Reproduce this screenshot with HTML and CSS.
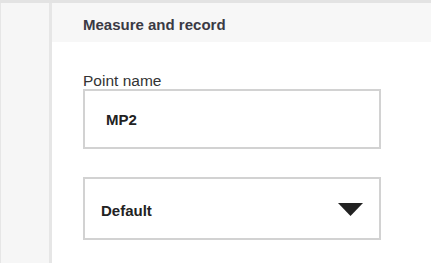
FILE: index.html
```html
<!DOCTYPE html>
<html>
<head>
<meta charset="utf-8">
<link rel="stylesheet" href="styles.css">
</head>
<body>
<div class="app">
  <aside class="sidebar"></aside>
  <main class="main">
    <div class="header">Measure and record</div>
    <div class="content">
      <label class="label">Point name</label>
      <div class="input">MP2</div>
      <div class="select">
        <span>Default</span>
        <svg class="caret" width="25" height="13" viewBox="0 0 25 13"><polygon points="0,0 25,0 12.5,13" fill="#222"/></svg>
      </div>
    </div>
  </main>
</div>
</body>
</html>
```
FILE: styles.css
```css
html, body {
  margin: 0;
  padding: 0;
  background: #fff;
}
body {
  width: 431px;
  height: 263px;
  overflow: hidden;
  font-family: "Liberation Sans", Arial, sans-serif;
  color: #333;
}
.app {
  display: flex;
  height: 260px;
  border-top: 3px solid #e3e3e3;
}
.sidebar {
  width: 48px;
  background: #f6f6f6;
  border-left: 1px solid #e6e6e6;
  border-right: 3px solid #e6e6e6;
}
.main {
  flex: 1;
  display: flex;
  flex-direction: column;
}
.header {
  height: 39px;
  background: #f7f7f7;
  display: flex;
  align-items: center;
  padding-left: 31px;
  padding-top: 3px;
  font-weight: bold;
  font-size: 15px;
  color: #3a3a44;
  box-sizing: border-box;
}
.content {
  padding: 30px 0 0 31px;
  display: flex;
  flex-direction: column;
}
.label {
  font-size: 15.5px;
  line-height: 17px;
  color: #333;
}
.input {
  width: 298px;
  height: 60px;
  box-sizing: border-box;
  border: 2px solid #d2d2d2;
  padding-left: 21px;
  display: flex;
  align-items: center;
  font-weight: bold;
  font-size: 15px;
  color: #222;
}
.select {
  margin-top: 28px;
  width: 298px;
  height: 63px;
  box-sizing: border-box;
  border: 2px solid #d2d2d2;
  padding: 3px 16px 0 16px;
  display: flex;
  align-items: center;
  justify-content: space-between;
  font-weight: bold;
  font-size: 15px;
  color: #222;
}
.caret {
  display: block;
  margin-bottom: 1px;
}
```
